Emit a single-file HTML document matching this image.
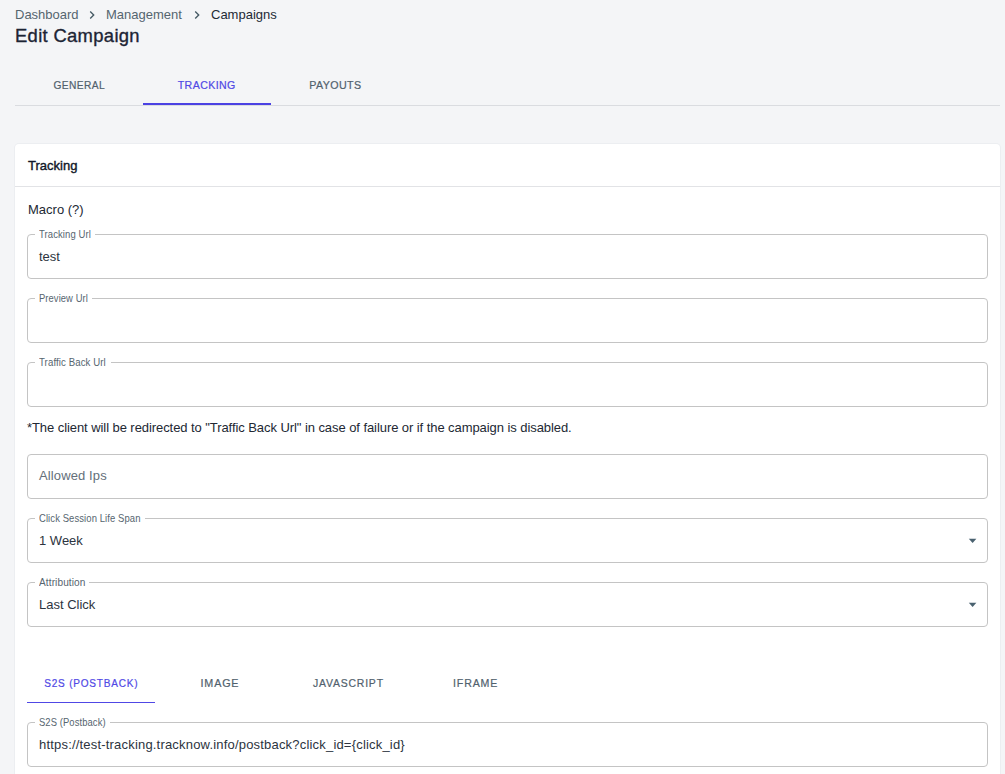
<!DOCTYPE html>
<html><head><meta charset="utf-8">
<style>
html,body{margin:0;padding:0;}
body{width:1005px;height:774px;overflow:hidden;background:#f4f5f7;position:relative;font-family:"Liberation Sans",sans-serif;}
.t{position:absolute;white-space:pre;line-height:1;}
.bc{font-size:13px;color:#55656f;}
.chev{position:absolute;width:16px;height:16px;}
.title{font-size:18.4px;font-weight:400;color:#1c2434;letter-spacing:0.33px;-webkit-text-stroke:0.35px #1c2434;}
.tab{font-size:11.6px;font-weight:400;color:#51616d;letter-spacing:0px;-webkit-text-stroke:0.22px currentColor;}
.sx{display:inline-block;letter-spacing:0.45px;transform-origin:50% 50%;}
.tab.act{color:#5048e5;}
.tabsline{position:absolute;left:15px;top:105px;width:985px;height:1px;background:#dadce0;}
.ind1{position:absolute;left:143px;top:103px;width:128px;height:2px;background:#4b42e3;}
.card{position:absolute;left:15px;top:144px;width:985px;height:700px;background:#fff;border-radius:4px;box-shadow:0 0 0 1px #eceef1;}
.cdiv{position:absolute;left:15px;top:186px;width:985px;height:1px;background:#e2e3e6;}
.ctitle{font-size:13px;font-weight:400;color:#121828;-webkit-text-stroke:0.4px #121828;}
.body13{font-size:13px;color:#222833;}
.fld{position:absolute;left:27px;width:961px;height:45px;box-sizing:border-box;border:1px solid #c4c4c4;border-radius:4px;}
.lbl{font-size:10.3px;color:#56656f;letter-spacing:0.1px;}
.lx{display:inline-block;transform-origin:0 50%;}
.gap{position:absolute;left:35px;height:3px;background:#fff;}
.val{font-size:13px;color:#2c3440;}
.ph{font-size:13px;color:#646f7a;letter-spacing:0.12px;}
.arrow{position:absolute;width:0;height:0;border-left:4px solid transparent;border-right:4px solid transparent;border-top:5px solid #455a64;}
.ind2{position:absolute;left:27px;top:702px;width:128px;height:1px;background:#5048e5;}
</style></head>
<body>
<!-- breadcrumbs -->
<div class="t bc" style="left:15px;top:8px;">Dashboard</div>
<svg class="chev" style="left:84px;top:7px" viewBox="0 0 24 24"><path fill="#455a64" d="M10 6L8.59 7.41 13.17 12l-4.58 4.59L10 18l6-6z"/></svg>
<div class="t bc" style="left:106px;top:8px;">Management</div>
<svg class="chev" style="left:189px;top:7px" viewBox="0 0 24 24"><path fill="#455a64" d="M10 6L8.59 7.41 13.17 12l-4.58 4.59L10 18l6-6z"/></svg>
<div class="t bc" style="left:211px;top:8px;color:#232a35;">Campaigns</div>
<div class="t title" style="left:15px;top:26.6px;">Edit Campaign</div>

<!-- tabs -->
<div class="t tab" style="left:15px;top:79px;width:128px;text-align:center;"><span class="sx" style="transform:scaleX(0.879)">GENERAL</span></div>
<div class="t tab act" style="left:143px;top:79px;width:128px;text-align:center;"><span class="sx" style="transform:scaleX(0.914)">TRACKING</span></div>
<div class="t tab" style="left:271px;top:79px;width:128px;text-align:center;"><span class="sx" style="transform:scaleX(0.921)">PAYOUTS</span></div>
<div class="tabsline"></div>
<div class="ind1"></div>

<!-- card -->
<div class="card"></div>
<div class="t ctitle" style="left:28px;top:159px;">Tracking</div>
<div class="cdiv"></div>
<div class="t body13" style="left:28px;top:203px;">Macro (?)</div>

<div class="fld" style="top:234px"></div>
<div class="gap" style="top:233px;width:60px"></div><div class="t lbl" style="left:39px;top:230px;"><span class="lx" style="transform:scaleX(0.922)">Tracking Url</span></div>
<div class="t val" style="left:39px;top:250px;">test</div>

<div class="fld" style="top:298px"></div>
<div class="gap" style="top:297px;width:57px"></div><div class="t lbl" style="left:39px;top:294px;"><span class="lx" style="transform:scaleX(0.91)">Preview Url</span></div>

<div class="fld" style="top:362px"></div>
<div class="gap" style="top:361px;width:76px"></div><div class="t lbl" style="left:39px;top:358px;"><span class="lx" style="transform:scaleX(0.936)">Traffic Back Url</span></div>

<div class="t body13" style="left:27px;top:421px;letter-spacing:-0.07px;">*The client will be redirected to "Traffic Back Url" in case of failure or if the campaign is disabled.</div>

<div class="fld" style="top:454px"></div>
<div class="t ph" style="left:39px;top:469px;">Allowed Ips</div>

<div class="fld" style="top:518px"></div>
<div class="gap" style="top:517px;width:110px"></div><div class="t lbl" style="left:39px;top:514px;"><span class="lx" style="transform:scaleX(0.919)">Click Session Life Span</span></div>
<div class="t val" style="left:39px;top:534px;">1 Week</div>
<svg style="position:absolute;left:960px;top:530px" width="25" height="20" viewBox="960 530 25 20"><path fill="#4a6270" d="M968.8 538.8H976.4L972.6 543z"/></svg>

<div class="fld" style="top:582px"></div>
<div class="gap" style="top:581px;width:54px"></div><div class="t lbl" style="left:39px;top:578px;"><span class="lx" style="transform:scaleX(0.98)">Attribution</span></div>
<div class="t val" style="left:39px;top:598px;">Last Click</div>
<svg style="position:absolute;left:960px;top:594px" width="25" height="20" viewBox="960 594 25 20"><path fill="#4a6270" d="M968.8 602.8H976.4L972.6 607z"/></svg>

<!-- inner tabs -->
<div class="t tab act" style="left:27px;top:677px;width:128px;text-align:center;"><span class="sx" style="letter-spacing:0.9px;transform:scaleX(0.866)">S2S (POSTBACK)</span></div>
<div class="t tab" style="left:156px;top:677px;width:128px;text-align:center;"><span class="sx" style="letter-spacing:0.9px;transform:scaleX(0.928)">IMAGE</span></div>
<div class="t tab" style="left:284px;top:677px;width:128px;text-align:center;"><span class="sx" style="letter-spacing:0.9px;transform:scaleX(0.899)">JAVASCRIPT</span></div>
<div class="t tab" style="left:412px;top:677px;width:128px;text-align:center;"><span class="sx" style="letter-spacing:0.9px;transform:scaleX(0.915)">IFRAME</span></div>
<div class="ind2"></div>

<div class="fld" style="top:722px"></div>
<div class="gap" style="top:721px;width:75px"></div><div class="t lbl" style="left:39px;top:718px;"><span class="lx" style="transform:scaleX(0.914)">S2S (Postback)</span></div>
<div class="t val" style="left:39px;top:738px;letter-spacing:0.19px;">https://test-tracking.tracknow.info/postback?click_id={click_id}</div>
</body></html>
